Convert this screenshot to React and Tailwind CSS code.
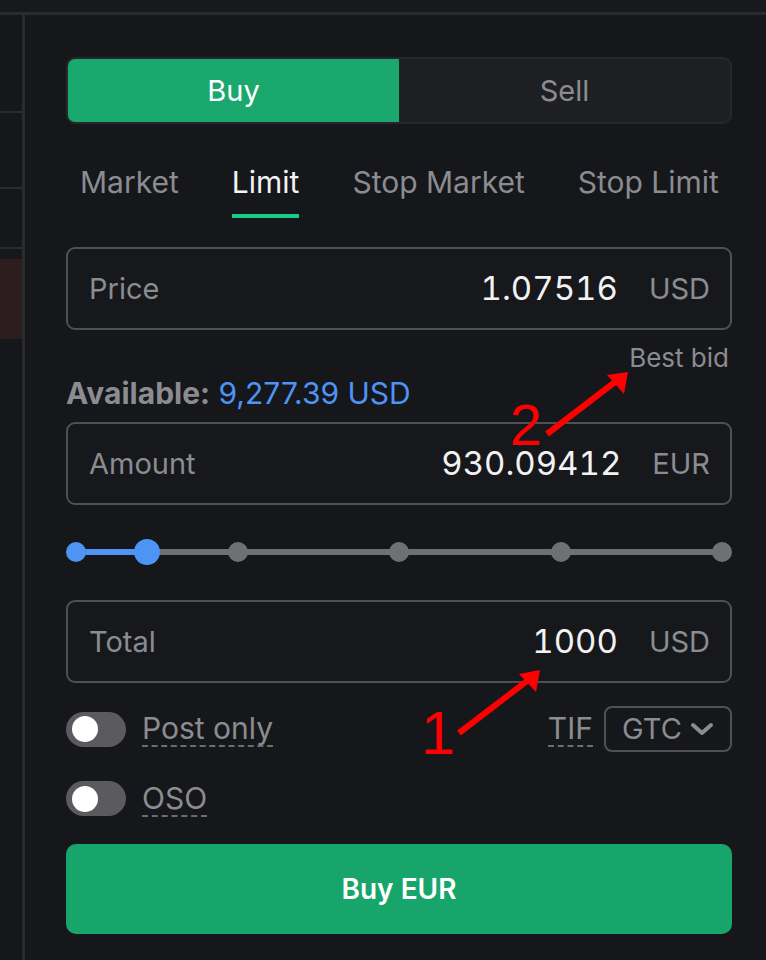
import React from 'react'

const font = { fontFamily: 'Inter, "Noto Sans", sans-serif' }

function Field({ label, value, unit, mt }) {
  return (
    <div
      className={`${mt} flex h-[83px] items-center rounded-[9px] border-2 border-[#4f5055] bg-[#17181c] pl-[21px] pr-[20px]`}
    >
      <span className="text-[29px] text-[#8b8c91]">{label}</span>
      <span className="ml-auto text-[33px] tabular-nums text-[#f2f2f3]">{value}</span>
      <span className="ml-[31px] text-[29px] text-[#8b8c91]">{unit}</span>
    </div>
  )
}

function Toggle() {
  return (
    <div className="flex h-[35px] w-[60px] shrink-0 items-center rounded-full bg-[#5b5b5f] pl-[6px]">
      <div className="h-[26px] w-[26px] rounded-full bg-white" />
    </div>
  )
}

function Tab({ label, active }) {
  return (
    <div className="flex shrink-0 flex-col items-stretch px-[20px]">
      <span
        className={`whitespace-nowrap text-center text-[30px] leading-[36px] ${
          active ? 'text-[#f2f2f3]' : 'text-[#8b8c91]'
        }`}
      >
        {label}
      </span>
      <div className={`mt-[14px] h-[4px] ${active ? 'bg-[#17cc85]' : 'bg-transparent'}`} />
    </div>
  )
}

function Slider() {
  const marks = ['left-[0%]', 'left-[25%]', 'left-[50%]', 'left-[75%]', 'left-[100%]']
  return (
    <div className="relative mx-[10px] mt-[33px] h-[28px]">
      <div className="absolute inset-x-0 top-1/2 h-[6px] -translate-y-1/2 rounded-full bg-[#6f7074]" />
      <div className="absolute left-0 top-1/2 h-[6px] w-[11%] -translate-y-1/2 rounded-full bg-[#4d94f5]" />
      {marks.map((m, i) => (
        <div
          key={m}
          className={`absolute top-1/2 h-[20px] w-[20px] -translate-x-1/2 -translate-y-1/2 rounded-full ${m} ${
            i === 0 ? 'bg-[#4d94f5]' : 'bg-[#6f7074]'
          }`}
        />
      ))}
      <div className="absolute left-[11%] top-1/2 h-[26px] w-[26px] -translate-x-1/2 -translate-y-1/2 rounded-full bg-[#4d94f5]" />
    </div>
  )
}

function Annotations() {
  return (
    <>
      <svg
        className="pointer-events-none absolute left-0 top-0"
        width="766"
        height="960"
        viewBox="0 0 766 960"
      >
        <line x1="547" y1="434" x2="615" y2="382" stroke="#ff0000" strokeWidth="6" />
        <polygon points="628,372 607,375 624,394" fill="#ff0000" />
        <line x1="459" y1="733" x2="527" y2="681" stroke="#ff0000" strokeWidth="6" />
        <polygon points="540,670 519,674 536,692" fill="#ff0000" />
      </svg>
      <span
        className="pointer-events-none absolute left-[510px] top-[393px] text-[58px] leading-[64px] text-[#ff0000]"
        style={{ fontFamily: '"Liberation Sans", Arial, sans-serif' }}
      >
        2
      </span>
      <span
        className="pointer-events-none absolute left-[421px] top-[698px] text-[62px] leading-[70px] text-[#ff0000]"
        style={{ fontFamily: '"Liberation Sans", Arial, sans-serif' }}
      >
        1
      </span>
    </>
  )
}

export default function App() {
  return (
    <div className="relative h-[960px] w-full overflow-hidden bg-[#16171b]" style={font}>
      <div className="h-[15px] border-b-[3px] border-[#2a2b2f] bg-[#18191d]" />
      <div className="flex h-[945px]">
        <div className="w-[25px] shrink-0 border-r-[3px] border-[#2a2b2f]">
          <div className="h-[98px] border-b-2 border-[#2a2b2f]" />
          <div className="h-[76px] border-b-2 border-[#2a2b2f]" />
          <div className="h-[60px] border-b-2 border-[#2a2b2f]" />
          <div className="mt-[10px] h-[80px] bg-[#2e1d1e]" />
        </div>

        <div className="flex min-w-0 flex-1 flex-col pl-[41px] pr-[34px] pt-[42px]">
          <div className="flex h-[67px] overflow-hidden rounded-[9px] border-2 border-[#26272b] bg-[#1e1f23]">
            <button className="flex w-1/2 items-center justify-center bg-[#1ba86e] text-[29px] text-white">
              Buy
            </button>
            <button className="flex w-1/2 items-center justify-center text-[29px] text-[#8b8c91]">
              Sell
            </button>
          </div>

          <div className="-ml-[6px] mt-[40px] flex gap-[13px]">
            <Tab label="Market" />
            <Tab label="Limit" active />
            <Tab label="Stop Market" />
            <Tab label="Stop Limit" />
          </div>

          <Field label="Price" value="1.07516" unit="USD" mt="mt-[29px]" />

          <div className="mt-[14px] pr-[3px] text-right text-[26px] leading-[28px] text-[#8b8c91]">
            Best bid
          </div>

          <div className="mt-[3px] text-[30px] leading-[36px]">
            <span className="font-bold text-[#8b8c91]">Available:</span>{' '}
            <span className="text-[#4d94f5]">9,277.39 USD</span>
          </div>

          <Field label="Amount" value="930.09412" unit="EUR" mt="mt-[11px]" />

          <Slider />

          <Field label="Total" value="1000" unit="USD" mt="mt-[34px]" />

          <div className="mt-[23px] flex h-[46px] items-center">
            <Toggle />
            <span className="ml-[16px] border-b-2 border-dashed border-[#6b6c70] text-[30px] leading-[34px] text-[#8b8c91]">
              Post only
            </span>
            <span className="ml-auto border-b-2 border-dashed border-[#6b6c70] text-[30px] leading-[34px] text-[#8b8c91]">
              TIF
            </span>
            <div className="ml-[11px] flex h-[46px] w-[128px] items-center rounded-[8px] border-2 border-[#4f5055] pl-[16px]">
              <span className="text-[29px] text-[#8b8c91]">GTC</span>
              <svg className="ml-[8px]" width="24" height="16" viewBox="0 0 24 16">
                <path
                  d="M3 4 L12 12 L21 4"
                  fill="none"
                  stroke="#8b8c91"
                  strokeWidth="4"
                  strokeLinecap="round"
                  strokeLinejoin="round"
                />
              </svg>
            </div>
          </div>

          <div className="mt-[29px] flex h-[35px] items-center">
            <Toggle />
            <span className="ml-[16px] border-b-2 border-dashed border-[#6b6c70] text-[30px] leading-[34px] text-[#8b8c91]">
              OSO
            </span>
          </div>

          <button className="mt-[28px] flex h-[90px] items-center justify-center rounded-[10px] bg-[#18a56b] text-[28px] font-semibold text-white">
            Buy EUR
          </button>
        </div>
      </div>
      <Annotations />
    </div>
  )
}
